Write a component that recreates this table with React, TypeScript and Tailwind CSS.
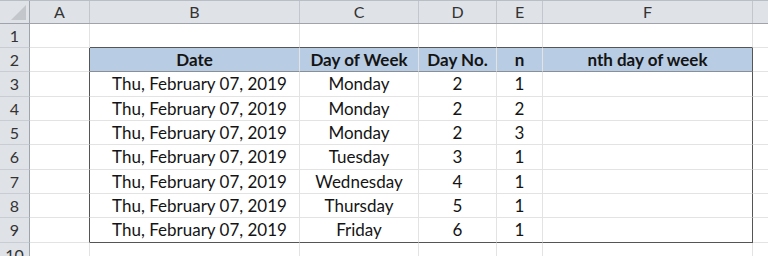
const cols = [
  { key: 'A', w: 'w-[60px]' },
  { key: 'B', w: 'w-[210px]' },
  { key: 'C', w: 'w-[119px]' },
  { key: 'D', w: 'w-[78px]' },
  { key: 'E', w: 'w-[46px]' },
  { key: 'F', w: 'w-[210px]' },
];

const data = [
  ['Thu, February 07, 2019', 'Monday', '2', '1'],
  ['Thu, February 07, 2019', 'Monday', '2', '2'],
  ['Thu, February 07, 2019', 'Monday', '2', '3'],
  ['Thu, February 07, 2019', 'Tuesday', '3', '1'],
  ['Thu, February 07, 2019', 'Wednesday', '4', '1'],
  ['Thu, February 07, 2019', 'Thursday', '5', '1'],
  ['Thu, February 07, 2019', 'Friday', '6', '1'],
];

// row heights so the grid lines land where Excel draws them
const heights = ['h-[24px]', 'h-[24px]', 'h-[25px]', 'h-[24px]', 'h-[24px]', 'h-[25px]', 'h-[24px]', 'h-[24px]', 'h-[25px]', 'h-[24px]'];

function cellBorder(row: number, col: number) {
  // col: 0 = A ... 5 = F ; table spans B2:F9
  const inTable = row >= 2 && row <= 9;
  let right = 'border-r-[#e3e3e3]';
  let bottom = 'border-b-[#e3e3e3]';
  if (inTable && (col === 0 || col === 5)) right = 'border-r-[#555555]';
  if (col >= 1 && col <= 5) {
    if (row === 1 || row === 9) bottom = 'border-b-[#555555]';
    if (row === 2) bottom = 'border-b-[#8a8f96]';
  }
  return `border-r border-b ${right} ${bottom}`;
}

export default function App() {
  const rows = Array.from({ length: 10 }, (_, i) => i + 1);

  return (
    <div className="w-[768px] h-[256px] overflow-hidden bg-white text-[#141414] font-['Lato','Open_Sans',sans-serif] text-[17px]">
      {/* column headers */}
      <div className="flex h-[24px] bg-[#dfe2e7] border-t border-t-[#b9bdc5] border-b border-b-[#9fa4ac]">
        <div className="relative w-[30px] shrink-0 border-r border-r-[#9fa4ac]">
          <div className="absolute right-[3px] bottom-[3px] w-0 h-0 border-l-[15px] border-l-transparent border-b-[15px] border-b-[#c3c6cb]" />
        </div>
        {cols.map((c) => (
          <div key={c.key} className={`${c.w} shrink-0 flex items-center justify-center border-r border-r-[#c3c7cd] text-[#333] text-[16px]`}>
            {c.key}
          </div>
        ))}
        <div className="flex-1" />
      </div>

      {rows.map((r, ri) => {
        const isHead = r === 2;
        const rec = r >= 3 && r <= 9 ? data[r - 3] : null;
        const vals = isHead
          ? ['', 'Date', 'Day of Week', 'Day No.', 'n', 'nth day of week']
          : rec
          ? ['', rec[0], rec[1], rec[2], rec[3], '']
          : ['', '', '', '', '', ''];
        return (
          <div key={r} className={`flex ${heights[ri]}`}>
            <div className="w-[30px] shrink-0 flex items-center justify-center bg-[#dfe2e7] border-r border-r-[#9fa4ac] border-b border-b-[#c9ccd2] text-[#333] text-[16px]">
              {r}
            </div>
            {cols.map((c, ci) => (
              <div
                key={c.key}
                className={`${c.w} shrink-0 flex items-center justify-center ${cellBorder(r, ci)} ${
                  isHead && ci >= 1 ? 'bg-[#b8cce4] font-bold' : ''
                } ${rec && ci === 1 ? 'pl-[10px]' : ''}`}
              >
                {vals[ci]}
              </div>
            ))}
            <div className="flex-1 border-b border-b-[#e3e3e3]" />
          </div>
        );
      })}
    </div>
  );
}
